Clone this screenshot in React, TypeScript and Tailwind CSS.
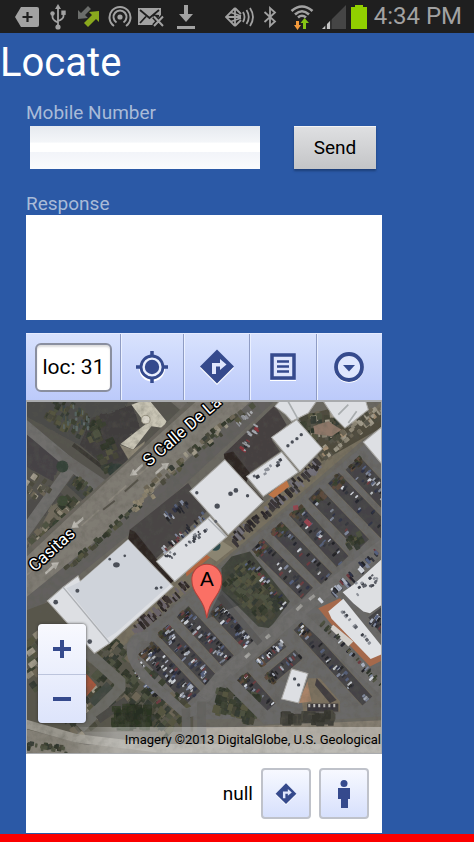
import React from 'react';

const carColors = ['#aab0be', '#7f879b', '#26272f', '#55607e', '#cfd3da', '#2f3346', '#6d3a3f', '#222226', '#33343c'];
const leafColors = ['#3a4030', '#2f3529', '#4d5140', '#55543f', '#343a33', '#454538'];
const roofColors = ['#5c6068', '#3c4048', '#8c9098'];
const dirtColors = ['#8f8877', '#6d6656', '#4b4a3c', '#a09a8a', '#57544a'];

const makeRandom = (start: number) => {
  let s = start;
  return () => {
    s = (s * 16807) % 2147483647;
    return s / 2147483647;
  };
};

interface ScatterProps {
  from: [number, number];
  to: [number, number];
  spread: number;
  count: number;
  colors: string[];
  size?: [number, number];
  seed: number;
}

// Small marks spread along a line: cars, bushes, roof vents
const Scatter: React.FC<ScatterProps> = ({ from, to, spread, count, colors, size = [13, 6], seed }) => {
  const random = makeRandom(seed * 7919 + 13);
  const length = Math.hypot(to[0] - from[0], to[1] - from[1]);
  const angle = (Math.atan2(to[1] - from[1], to[0] - from[0]) * 180) / Math.PI;
  random();
  return (
    <g transform={`translate(${from[0]} ${from[1]}) rotate(${angle})`}>
      {Array.from({ length: count }, (_, i) => {
        const x = random() * length;
        const y = (random() - 0.5) * spread;
        const w = size[1] * (0.7 + random() * 0.7);
        const h = size[0] * (0.7 + random() * 0.6);
        return (
          <rect
            key={i}
            x={x - w / 2}
            y={y - h / 2}
            width={w}
            height={h}
            rx={2}
            fill={colors[Math.floor(random() * colors.length)]}
          />
        );
      })}
    </g>
  );
};

interface ParkingRow {
  line: [number, number, number, number];
  width: number;
  cars: number;
}

const parkingRows: ParkingRow[] = [
  { line: [998, 205, 1110, 325], width: 58, cars: 34 },
  { line: [940, 250, 1100, 415], width: 46, cars: 20 },
  { line: [882, 296, 1030, 450], width: 48, cars: 12 },
  { line: [826, 346, 968, 500], width: 48, cars: 34 },
  { line: [768, 396, 920, 552], width: 46, cars: 22 },
  { line: [712, 448, 862, 596], width: 48, cars: 28 },
  { line: [590, 640, 694, 748], width: 50, cars: 62 },
  { line: [488, 650, 624, 798], width: 48, cars: 64 },
  { line: [430, 704, 578, 862], width: 46, cars: 56 },
  { line: [380, 760, 520, 908], width: 58, cars: 70 },
  { line: [666, 846, 750, 940], width: 46, cars: 24 },
  { line: [836, 692, 1042, 918], width: 40, cars: 38 },
  { line: [715, 806, 790, 744], width: 30, cars: 24 },
  { line: [745, 855, 836, 778], width: 36, cars: 22 }
];

const AerialImage: React.FC = () => (
  <svg viewBox="22 22 1061 1053" className="block w-full" role="img" aria-label="Satellite map">
    <defs>
      <filter id="ground" x="0" y="0" width="100%" height="100%">
        <feTurbulence type="fractalNoise" baseFrequency="0.05" numOctaves="4" seed="4" />
        <feColorMatrix values="0 0 0 0 0.1  0 0 0 0 0.1  0 0 0 0 0.08  1.8 0 0 0 -0.72" />
      </filter>
      <filter id="rough" x="-5%" y="-5%" width="110%" height="110%">
        <feTurbulence type="fractalNoise" baseFrequency="0.04" numOctaves="2" seed="8" result="n" />
        <feDisplacementMap in="SourceGraphic" in2="n" scale="10" />
      </filter>
      <filter id="photo" x="0" y="0" width="100%" height="100%">
        <feGaussianBlur stdDeviation="1.5" />
      </filter>
    </defs>

    <g filter="url(#photo)">
      <rect x="-20" y="-20" width="1150" height="1140" fill="#6b6861" />

      {/* north west blocks */}
      <path d="M-10 -10H560L-10 490Z" fill="#55534e" />
      <g filter="url(#rough)">
        <path d="M10 10H330L250 190L10 60Z" fill="#4b4c48" />
        <path d="M10 110L130 190L100 260L10 210Z" fill="#454344" />
        <path d="M215 70L340 30L360 100L300 150L330 205L285 240L180 150Z" fill="#413d3d" />
        <path d="M165 240L240 290L205 330L140 270Z" fill="#454744" />
        <path d="M10 330L90 270L130 300L10 430Z" fill="#4d4b49" />
        <path d="M100 330L160 310L200 350L60 470L20 470Z" fill="#706a5c" />
      </g>
      <path d="M10 88L250 290M10 420L160 210" stroke="#6f6e6c" strokeWidth="34" />
      <path d="M100 150L270 265L250 300L140 215Z" fill="#6a6866" />
      <path d="M160 150L265 230" stroke="#383631" strokeWidth="12" />
      <Scatter from={[90, 40]} to={[230, 110]} spread={80} count={60} colors={leafColors} size={[16, 12]} seed={1} />
      <Scatter from={[130, 70]} to={[210, 70]} spread={70} count={26} colors={['#55625f', '#5f6b69', '#3b4544']} size={[14, 5]} seed={2} />
      <Scatter from={[225, 90]} to={[290, 240]} spread={50} count={40} colors={leafColors} size={[20, 16]} seed={3} />
      <Scatter from={[165, 255]} to={[225, 305]} spread={26} count={36} colors={leafColors} size={[14, 9]} seed={4} />
      <Scatter from={[30, 460]} to={[170, 320]} spread={50} count={60} colors={dirtColors.concat(leafColors)} size={[18, 14]} seed={5} />
      <Scatter from={[22, 260]} to={[80, 300]} spread={60} count={24} colors={dirtColors} size={[15, 12]} seed={41} />
      <circle cx="128" cy="215" r="18" fill="#344238" />
      <circle cx="128" cy="318" r="16" fill="#3c4835" />
      <circle cx="112" cy="390" r="14" fill="#2f3b2a" />
      <ellipse cx="292" cy="228" rx="28" ry="22" fill="#2f3a35" />
      <path d="M335 30L385 12L440 80L432 100L395 95L340 165L302 148L378 88Z" fill="#c9c5b5" />
      <path d="M300 150L340 165L375 140L370 195L330 200Z" fill="#8e8776" />
      <circle cx="378" cy="75" r="13" fill="#dedace" stroke="#999483" strokeWidth="3" />

      {/* boulevard */}
      <path d="M440 -10L520 60" stroke="#6f6c66" strokeWidth="30" />
      <path d="M-20 520L330 210L560 -10" stroke="#67645c" strokeWidth="30" fill="none" />
      <path d="M-40 620L300 300L680 -40" stroke="#7f7b73" strokeWidth="112" fill="none" />
      <path d="M-20 670L345 375L760 -10" stroke="#63615e" strokeWidth="48" fill="none" />
      <path d="M22 540L300 290L600 30" stroke="#8d887e" strokeWidth="5" fill="none" strokeDasharray="70 40" />
      <path d="M250 345L285 318M315 290L355 255" stroke="#555149" strokeWidth="6" fill="none" />
      <Scatter from={[130, 530]} to={[360, 325]} spread={16} count={44} colors={leafColors} size={[12, 14]} seed={6} />
      <Scatter from={[380, 290]} to={[700, 22]} spread={28} count={64} colors={leafColors.concat(dirtColors)} size={[14, 13]} seed={7} />
      <Scatter from={[330, 340]} to={[400, 290]} spread={30} count={14} colors={['#998e76', '#887f6c']} size={[12, 12]} seed={8} />
      <g fill="#bab7b0">
        <path d="M155 400L163 378L168 385L190 366L192 374L173 390L178 398Z" />
        <path d="M330 243L340 222L344 228L368 206L370 214L349 234L354 241Z" />
        <path d="M448 205L438 226L433 220L408 240L406 233L428 213L424 206Z" />
        <path d="M118 502L108 524L103 518L78 540L76 532L98 512L94 504Z" />
      </g>

      {/* lots behind the shops */}
      <path d="M330 405L505 265L560 350L410 490L385 470Z" fill="#484444" />
      <path d="M612 178L765 32L800 90L755 135L780 170L680 240Z" fill="#443f40" />
      <path d="M330 405L345 410L465 560L450 575L325 435ZM612 178L640 170L690 235L680 262L730 315L722 325L615 200Z" fill="#2e2724" />
      <Scatter from={[440, 370]} to={[505, 320]} spread={32} count={22} colors={carColors} seed={9} />
      <Scatter from={[430, 470]} to={[555, 360]} spread={18} count={30} colors={carColors} seed={10} />
      <Scatter from={[665, 165]} to={[712, 90]} spread={22} count={16} colors={['#8d3239', '#a9acb4', '#252329']} seed={11} />
      <Scatter from={[650, 90]} to={[700, 45]} spread={8} count={7} colors={['#a9abae', '#8d8f94']} seed={12} />

      {/* shop walkways and planting */}
      <path d="M230 790L1100 42" stroke="#77705f" strokeWidth="50" />
      <path d="M860 60L940 40L985 100L1100 30L1100 90L905 200L860 120Z" fill="#4f4b3d" />
      <Scatter from={[840, 100]} to={[960, 90]} spread={80} count={80} colors={dirtColors.concat(leafColors)} size={[18, 14]} seed={13} />
      <path d="M880 95L925 80L965 105L935 125L885 118Z" fill="#8f7869" />
      <Scatter from={[905, 185]} to={[1083, 40]} spread={34} count={70} colors={dirtColors.concat(['#a58f74'])} size={[14, 12]} seed={14} />

      {/* main parking lot */}
      <path d="M350 728L1100 92V950L840 965L520 975L330 800Z" fill="#696867" />
      <Scatter from={[340, 708]} to={[500, 570]} spread={22} count={60} colors={['#2b2525', '#39302f', '#6c656b']} size={[22, 8]} seed={15} />
      <Scatter from={[640, 440]} to={[900, 205]} spread={22} count={84} colors={['#2c2829', '#3a3638', '#74717a']} size={[22, 8]} seed={16} />
      <path d="M635 485L690 470L810 620L750 700L715 695L605 585L605 520Z" fill="#40433a" />
      <Scatter from={[640, 530]} to={[765, 655]} spread={92} count={190} colors={leafColors} size={[16, 14]} seed={17} />
      <Scatter from={[680, 495]} to={[800, 640]} spread={22} count={32} colors={carColors} seed={18} />
      {parkingRows.map((row, i) => {
        const [x1, y1, x2, y2] = row.line;
        return (
          <g key={i}>
            <line x1={x1} y1={y1} x2={x2} y2={y2} stroke="#746d60" strokeWidth={row.width + 4} />
            <line x1={x1} y1={y1} x2={x2} y2={y2} stroke="#444346" strokeWidth={row.width} />
            <Scatter from={[x1, y1]} to={[x1 + (x2 - x1) * 0.14, y1 + (y2 - y1) * 0.14]} spread={row.width - 8} count={16} colors={['#4a4030', '#3a3529', '#5e4a3c', '#39402f']} size={[12, 9]} seed={i + 60} />
            <Scatter from={[x1, y1]} to={[x2, y2]} spread={row.width - 14} count={row.cars} colors={carColors} seed={i + 20} />
          </g>
        );
      })}
      <Scatter from={[985, 452]} to={[1025, 430]} spread={32} count={22} colors={leafColors} size={[14, 12]} seed={42} />
      <path d="M820 340L835 338M856 376L872 392" stroke="#984450" strokeWidth="14" />
      <path d="M1100 445L835 650L600 850L550 910" stroke="#6f6e6d" strokeWidth="40" fill="none" />
      <path d="M600 605L720 745" stroke="#5c5b5b" strokeWidth="20" />
      <path d="M830 650L1100 900" stroke="#6e6d6c" strokeWidth="26" />
      <path d="M830 646L846 630M868 614L884 602M738 730L750 720M676 788L690 776" stroke="#a5a4a1" strokeWidth="10" />

      {/* southern edge */}
      <path d="M10 650L90 620L225 775L330 760L350 850L520 960V1010H10Z" fill="#59564c" />
      <Scatter from={[22, 720]} to={[230, 1000]} spread={170} count={150} colors={leafColors.concat(dirtColors)} size={[22, 18]} seed={37} />
      <Scatter from={[230, 770]} to={[480, 990]} spread={120} count={170} colors={leafColors.concat(['#6d6656', '#57544a'])} size={[22, 16]} seed={38} />
      <Scatter from={[340, 800]} to={[430, 920]} spread={30} count={40} colors={carColors} seed={44} />
      <path d="M198 835L230 870L200 905Z" fill="#a4563c" />
      <path d="M180 1000L300 880L300 860L190 760" stroke="#6b6a65" strokeWidth="34" fill="none" />
      <path d="M215 925L270 870" stroke="#414741" strokeWidth="26" />
      <path d="M235 975L320 915" stroke="#4b4a45" strokeWidth="24" />
      <Scatter from={[285, 965]} to={[385, 965]} spread={60} count={60} colors={['#2c3424', '#343c2a', '#282e22']} size={[24, 20]} seed={45} />
      <path d="M335 760Q340 720 385 725M335 760Q330 800 390 860L490 950Q520 965 550 910" stroke="#6d6c6b" strokeWidth="28" fill="none" />
      <Scatter from={[590, 915]} to={[710, 945]} spread={80} count={110} colors={leafColors} size={[20, 16]} seed={39} />
      <path d="M620 850L740 970L1100 945" stroke="#6a6968" strokeWidth="36" fill="none" />
      <path d="M865 850L900 850L960 920V950H850L845 910Z" fill="#7c715f" />
      <path d="M890 850L950 915L930 925L885 870Z" fill="#423e40" />
      <path d="M862 860L875 920L835 925Z" fill="#a98368" />
      <path d="M862 938H955" stroke="#38353a" strokeWidth="24" />
      <path d="M865 932H955" stroke="#c2bfbb" strokeWidth="10" strokeDasharray="6 9" />
      <path d="M10 1000L200 1050L1100 1040V1100H10Z" fill="#858177" />
      <path d="M560 1000L1100 975V1100H560Z" fill="#877f72" />
      <Scatter from={[790, 970]} to={[935, 970]} spread={26} count={40} colors={['#403f39', '#4a483f', '#35352e']} size={[24, 20]} seed={46} />
      <path d="M10 985L170 1030L420 1060H1100" stroke="#99968d" strokeWidth="26" fill="none" />
      <path d="M498 940L500 1030M545 920V1030" stroke="#656461" strokeWidth="26" />
      <Scatter from={[22, 1050]} to={[140, 1068]} spread={20} count={30} colors={leafColors} size={[12, 10]} seed={40} />

      <rect x="-20" y="-20" width="1150" height="1140" filter="url(#ground)" opacity="0.4" />

      {/* shops */}
      <path d="M498 530L560 478L600 465L500 545Z" fill="#b0653f" />
      <path d="M745 300L800 255L808 275L762 310Z" fill="#bd7547" />
      <path d="M560 480L600 435L640 460L590 500Z" fill="#8b8572" />
      <circle cx="586" cy="452" r="16" fill="#2d4b4e" />
      <g fill="#dddfe3" stroke="#a9a8a4" strokeWidth="3">
        <path d="M83 618L130 577L175 543L182 560L325 435L460 575L270 745L224 775Z" />
        <path d="M410 500L570 365L622 425L465 560Z" />
        <path d="M510 290L615 195L730 320L625 420Z" />
        <path d="M680 245L785 172L835 232L730 305Z" />
        <path d="M755 128L830 75L907 162L840 230Z" />
        <path d="M765 35L785 12H895L865 55L815 80L798 60Z" />
        <path d="M905 12H1035L1045 45L975 100L940 65Z" />
        <path d="M1030 142L1100 85V225Z" />
        <path d="M785 912L815 822L864 836L836 924Z" />
      </g>
      <path d="M182 560L325 435L450 570L290 712L262 730L140 580Z" fill="#cfd3da" />
      <path d="M130 577L270 745M565 372L618 425" stroke="#adb0b4" strokeWidth="4" />
      <path d="M800 12L835 75M955 60L985 30M1010 50L985 85" stroke="#a9adaf" strokeWidth="5" />
      <Scatter from={[440, 490]} to={[590, 380]} spread={18} count={20} colors={roofColors} size={[8, 8]} seed={31} />
      <Scatter from={[705, 250]} to={[785, 200]} spread={14} count={10} colors={roofColors} size={[9, 9]} seed={32} />
      <g fill="#4b5058">
        <circle cx="632" cy="297" r="7" />
        <circle cx="648" cy="287" r="7" />
        <circle cx="592" cy="334" r="8" />
        <circle cx="531" cy="294" r="5" />
        <circle cx="683" cy="303" r="5" />
        <ellipse cx="290" cy="510" rx="10" ry="8" />
        <circle cx="173" cy="588" r="6" />
        <circle cx="315" cy="483" r="4" />
        <circle cx="270" cy="493" r="4" />
        <circle cx="108" cy="622" r="7" />
        <circle cx="210" cy="740" r="7" />
        <circle cx="410" cy="580" r="5" />
        <circle cx="424" cy="578" r="4" />
        <circle cx="804" cy="153" r="5" />
        <circle cx="817" cy="142" r="5" />
        <circle cx="831" cy="132" r="5" />
        <circle cx="844" cy="120" r="5" />
        <circle cx="824" cy="852" r="5" />
        <circle cx="836" cy="870" r="5" />
      </g>

      {/* east building */}
      <path d="M895 640L960 610L985 640L1100 785V790L1050 815L960 720Z" fill="#a5694b" />
      <path d="M925 650L970 612L1100 772L1052 792L935 672Z" fill="#dfe1e4" />
      <path d="M968 592L1000 570L1100 480V620L1050 655L1030 650L1000 625Z" fill="#dddfe2" />
      <path d="M940 690L1000 740L985 755L930 700Z" fill="#d2cfca" />
      <Scatter from={[960, 640]} to={[1065, 765]} spread={6} count={12} colors={roofColors} size={[9, 9]} seed={33} />
      <Scatter from={[1005, 590]} to={[1083, 535]} spread={40} count={16} colors={roofColors} size={[8, 8]} seed={34} />
      <Scatter from={[900, 630]} to={[1083, 465]} spread={18} count={36} colors={carColors} size={[18, 7]} seed={35} />
      <path d="M1045 668L1100 625V740Z" fill="#454447" />
      <Scatter from={[1060, 670]} to={[1090, 690]} spread={50} count={20} colors={carColors} seed={36} />
      <Scatter from={[890, 665]} to={[1080, 870]} spread={14} count={34} colors={carColors.concat(leafColors)} seed={43} />
    </g>

    {/* street names */}
    <g
      fontFamily="Roboto, 'Liberation Sans', sans-serif"
      fontSize="50"
      fill="#fff"
      stroke="#000"
      strokeWidth="9"
      strokeLinejoin="round"
      paintOrder="stroke"
    >
      <text transform="translate(388 217) rotate(-41)">S Calle De La</text>
      <text transform="translate(45 532) rotate(-42)">Casitas</text>
    </g>

    {/* marker */}
    <path d="M605 585L660 630L610 650L562 672Z" fill="#26282a" opacity="0.35" />
    <path
      d="M561 670C556 640 550 628 535 605C522 588 516 572 516 554A45 46 0 0 1 606 554C606 572 600 588 588 605C572 628 566 640 561 670Z"
      fill="#fb7065"
      stroke="#b4413a"
      strokeWidth="3"
    />
    <text x="561" y="573" textAnchor="middle" fontFamily="'Liberation Sans', sans-serif" fontSize="62" fill="#000">
      A
    </text>
  </svg>
);

const StatusBar: React.FC = () => (
  <div className="flex h-[33px] items-center justify-between bg-[#1f1f1f] pl-[11px] pr-3 text-[#a2a2a2]">
    <div className="flex items-center">
      <div className="flex w-[31px] justify-center">
        <svg width="24" height="22" viewBox="0 0 24 22">
          <path d="M6 1H22Q24 1 24 3V19Q24 21 22 21H6L0 11Z" fill="#a2a2a2" />
          <path d="M12.500 6V16M7.500 11H17.500" stroke="#1f1f1f" strokeWidth="2.200" />
        </svg>
      </div>
      <div className="flex w-[31px] justify-center">
        <svg width="16" height="26" viewBox="0 0 16 26" fill="none" stroke="#a2a2a2" strokeWidth="1.800">
          <path d="M8 4V23M2.500 10V13Q2.500 16 8 18.500M13.500 9V12Q13.500 15 8 17" />
          <path d="M8 0L11 5H5Z" fill="#a2a2a2" stroke="none" />
          <circle cx="8" cy="23" r="2.600" fill="#a2a2a2" stroke="none" />
          <circle cx="2.500" cy="9.500" r="2.200" fill="#a2a2a2" stroke="none" />
          <rect x="11.300" y="6.500" width="4.400" height="4.400" fill="#a2a2a2" stroke="none" />
        </svg>
      </div>
      <div className="flex w-[31px] justify-center">
        <svg width="24" height="24" viewBox="0 0 24 24">
          <path d="M11 1L14 4L8 10L11 13L1 14L1 5L4 8Z" fill="#6b6d6b" />
          <path d="M22 6V17L19 14L11 22L7 18L15 10L12 7Z" fill="#89a81d" />
        </svg>
      </div>
      <div className="flex w-[31px] justify-center">
        <svg width="24" height="24" viewBox="0 0 24 24" fill="none" stroke="#a2a2a2" strokeWidth="2">
          <circle cx="12" cy="12" r="2.600" fill="#a2a2a2" stroke="none" />
          <path d="M8.500 17.500A6.500 6.500 0 1 1 15.500 17.500" />
          <path d="M6 21A10.500 10.500 0 1 1 18 21" />
        </svg>
      </div>
      <div className="flex w-[31px] justify-center">
        <svg width="26" height="20" viewBox="0 0 26 20">
          <path d="M0 1H23V18H0Z" fill="#a2a2a2" />
          <path d="M2 3L11.500 11L21 3M2 16L8 9.500M21 9L15 8.500" stroke="#1f1f1f" strokeWidth="1.800" fill="none" />
          <path d="M16 9.500L25 19M25 9.500L16 19" stroke="#1f1f1f" strokeWidth="5" />
          <path d="M16 9.500L25 19M25 9.500L16 19" stroke="#a2a2a2" strokeWidth="2" />
        </svg>
      </div>
      <div className="ml-1 flex w-[31px] justify-center">
        <svg width="18" height="24" viewBox="0 0 18 24" fill="#a2a2a2">
          <path d="M7 0H11V9H16L9 17L2 9H7Z" />
          <path d="M0 21H18V24H0Z" />
        </svg>
      </div>
    </div>
    <div className="flex items-center">
      <div className="flex w-[30px] justify-center">
        <svg width="30" height="20" viewBox="0 0 30 20" fill="none" stroke="#a2a2a2" strokeWidth="1.800">
          <path d="M10 1L1 10L10 19M10 1L16 7M10 19L16 13M1 10H16M10 1V19M6 5.500L16 9M6 14.500L16 11" />
          <path d="M18 5Q21 10 18 15M21.500 3Q26 10 21.500 17M25 1Q31 10 25 19" />
        </svg>
      </div>
      <div className="flex w-[30px] justify-center">
        <svg width="14" height="22" viewBox="0 0 14 22" fill="none" stroke="#a2a2a2" strokeWidth="1.800">
          <path d="M1.500 6L12 15.500L7 20V2L12 6.500L1.500 16" />
        </svg>
      </div>
      <div className="flex w-[35px] justify-center">
        <svg width="24" height="26" viewBox="0 0 24 26" fill="none">
          <g stroke="#a2a2a2" strokeWidth="2.600">
            <path d="M1.500 7Q12 -2 22.500 7" />
            <path d="M5 10.500Q12 4 19 10.500" />
            <path d="M8 13.500Q12 10 16 13.500" />
          </g>
          <path d="M6 17H9V21H11L7.500 26L4 21H6Z" fill="#f39a3c" />
          <path d="M13 25H16V19H19L14.500 14L10.500 19H13Z" fill="#86c415" />
        </svg>
      </div>
      <div className="flex w-[28px] justify-center">
        <svg width="24" height="24" viewBox="0 0 24 24">
          <path d="M0 24L24 0V24Z" fill="#454545" />
          <path d="M0 24L3.500 20.500V24ZM5 24V19L8 16V24Z" fill="#c4c4c4" />
          <path d="M4 17V24M9 12V24" stroke="#1f1f1f" strokeWidth="1" />
        </svg>
      </div>
      <div className="flex w-[22px] justify-center">
        <svg width="16" height="24" viewBox="0 0 16 24" fill="#91d000">
          <path d="M4 0H12V2H16V24H0V2H4Z" />
        </svg>
      </div>
      <span className="ml-1 text-[24px] leading-[33px]">4:34 PM</span>
    </div>
  </div>
);

const DirectionsIcon: React.FC<{ size: number }> = ({ size }) => (
  <svg width={size} height={size} viewBox="0 0 36 36">
    <path d="M18 2L35 19L18 36L1 19Z" fill="#fff" />
    <path d="M18 0.500L35 17.500L18 34.500L1 17.500Z" fill="#354a8d" />
    <path d="M13 25V14H21V10L27.500 15.500L21 21V17.500H17V25Z" fill="#dfe6fc" />
  </svg>
);

const toolClass =
  'flex items-center justify-center border-l border-[#8f9cc4] shadow-[inset_1px_0_0_#eaf0ff]';

const Toolbar: React.FC = () => (
  <div className="grid h-[67px] grid-cols-[94px_63px_1fr_1fr_1fr] border-t border-[#e6ecff] bg-gradient-to-b from-[#d8e2fd] to-[#bccafa]">
    <div className="flex items-center justify-center">
      <input
        type="text"
        aria-label="Search location"
        defaultValue="loc: 31"
        className="h-[49px] w-[77px] rounded-md border-2 border-[#8a8f9f] bg-white px-1.5 text-[21px] text-black outline-none shadow-[inset_0_2px_2px_#ddd]"
      />
    </div>
    <button type="button" aria-label="My location" className={toolClass}>
      <svg width="32" height="33" viewBox="0 0 32 33" fill="none">
        <circle cx="16" cy="17.500" r="11.500" stroke="#fff" strokeWidth="3" />
        <circle cx="16" cy="16" r="11" fill="#e9effe" stroke="#354a8d" strokeWidth="2.800" />
        <circle cx="16" cy="16" r="7.200" fill="#354a8d" />
        <path d="M16 0V5M16 27V32M0 16H5M27 16H32" stroke="#354a8d" strokeWidth="3.500" />
      </svg>
    </button>
    <button type="button" aria-label="Directions" className={toolClass}>
      <DirectionsIcon size={36} />
    </button>
    <button type="button" aria-label="List" className={toolClass}>
      <svg width="26" height="28" viewBox="0 0 26 28" fill="none">
        <path d="M0 27.500H26" stroke="#fff" />
        <rect x="2" y="2" width="22" height="23" fill="#dfe6fd" stroke="#354a8d" strokeWidth="3.500" />
        <path d="M7 8.500H19M7 13.500H19M7 18.500H19" stroke="#354a8d" strokeWidth="2.600" />
      </svg>
    </button>
    <button type="button" aria-label="More" className={toolClass}>
      <svg width="32" height="32" viewBox="0 0 32 32" fill="none">
        <circle cx="16" cy="17" r="13.200" stroke="#fff" strokeWidth="3" />
        <circle cx="16" cy="16" r="13" fill="#dfe6fd" stroke="#354a8d" strokeWidth="3.800" />
        <path d="M10 14H22L16 20.500Z" fill="#354a8d" />
      </svg>
    </button>
  </div>
);

const MapView: React.FC = () => (
  <div className="relative overflow-hidden border border-t-2 border-[#a9abae]">
    <AerialImage />
    <div className="absolute bottom-[30px] left-[11px] flex w-12 flex-col rounded-sm bg-gradient-to-b from-[#f8f9fe] to-[#dde4fb] shadow-[0_0_3px_#333]">
      <button type="button" aria-label="Zoom in" className="flex h-[51px] items-center justify-center border-b border-[#bcc4dc]">
        <svg width="18" height="18" viewBox="0 0 18 18">
          <path d="M9 0V18M0 9H18" stroke="#354a8d" strokeWidth="4" />
        </svg>
      </button>
      <button type="button" aria-label="Zoom out" className="flex h-[48px] items-center justify-center">
        <svg width="18" height="4" viewBox="0 0 18 4">
          <path d="M0 2H18" stroke="#354a8d" strokeWidth="4" />
        </svg>
      </button>
    </div>
    <div className="absolute bottom-0 right-0 whitespace-nowrap bg-gradient-to-r from-transparent to-white/35 to-15% pl-14 text-[13px] leading-[26px] text-black">
      Imagery ©2013 DigitalGlobe, U.S. Geological
    </div>
  </div>
);

const footerButton =
  'flex h-[51px] w-[50px] items-center justify-center rounded-[4px] border-2 border-[#bfc2ca] bg-gradient-to-b from-[#f7f9ff] to-[#d7e0fc]';

export default function App() {
  return (
    <div className="min-h-screen border-b-8 border-[#fb0000] bg-[#2b59a6] font-[Roboto,'Liberation_Sans',sans-serif]">
      <StatusBar />
      <h1 className="pt-0.5 text-[40px] leading-[56px] text-white">Locate</h1>

      <main className="pb-px pl-[26px] pr-[92px]">
        <label htmlFor="mobile" className="mt-2.5 block text-[19px] leading-6 text-[#a9bbd8]">
          Mobile Number
        </label>
        <div className="mt-px flex justify-between pl-1 pr-1.5">
          <input
            id="mobile"
            type="tel"
            className="h-[43px] w-[230px] bg-[linear-gradient(#e6eaef,#f4f6f9_38%,#fff_39%,#fff_60%,#f2f4f9_61%,#fafbfd)] px-2 text-lg outline-none"
          />
          <button
            type="button"
            className="h-[43px] w-[82px] bg-gradient-to-b from-[#dfe0e2] to-[#c4c5c7] pt-0.5 text-[19px] text-black shadow-[0_2px_2px_#1d3f78,inset_0_1px_0_#f3f3f3]"
          >
            Send
          </button>
        </div>

        <label htmlFor="response" className="mt-[23px] block text-[19px] leading-[23px] text-[#a9bbd8]">
          Response
        </label>
        <textarea id="response" className="block h-[105px] w-full resize-none bg-white p-2 outline-none" />

        <section className="mt-[13px] bg-white">
          <Toolbar />
          <MapView />
          <div className="flex items-center justify-end gap-2 py-[14px] pr-[13px]">
            <span className="text-[19px] text-black">null</span>
            <button type="button" aria-label="Get directions" className={footerButton}>
              <DirectionsIcon size={22} />
            </button>
            <button type="button" aria-label="Street view" className={footerButton}>
              <svg width="14" height="28" viewBox="0 0 14 28" fill="#354a8d">
                <circle cx="7" cy="3.500" r="3.500" />
                <path d="M1 8H13V19H11V28H4V19H1Z" />
              </svg>
            </button>
          </div>
        </section>
      </main>
    </div>
  );
}
